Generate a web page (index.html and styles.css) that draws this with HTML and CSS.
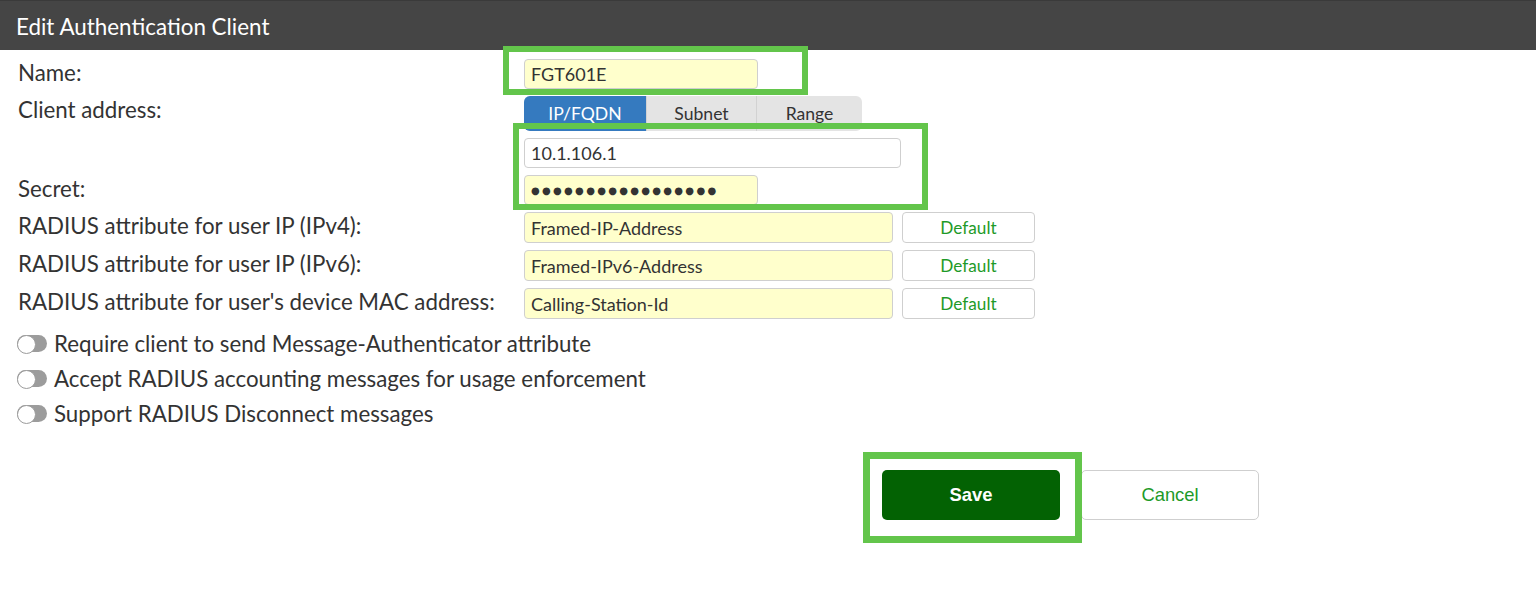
FILE: index.html
```html
<!DOCTYPE html>
<html lang="en">

<head>
    <meta charset="UTF-8">
    <meta name="viewport" content="width=device-width, initial-scale=1.0">
    <title>Edit Authentication Client</title>
    <link rel="stylesheet" href="styles.css">
</head>

<body>
    <header class="title-bar">Edit Authentication Client</header>

    <main class="dialog">
        <div class="form-grid">
            <label class="label">Name:</label>
            <div class="field"><input class="input short yellow" type="text" value="FGT601E" readonly></div>

            <label class="label">Client address:</label>
            <div class="field auto">
                <div class="tabs">
                    <span class="tab active">IP/FQDN</span>
                    <span class="tab">Subnet</span>
                    <span class="tab">Range</span>
                </div>
            </div>

            <span class="label"></span>
            <div class="field"><input class="input wide" type="text" value="10.1.106.1" readonly></div>

            <label class="label">Secret:</label>
            <div class="field"><div class="input short yellow dots">●●●●●●●●●●●●●●●●●</div></div>

            <label class="label">RADIUS attribute for user IP (IPv4):</label>
            <div class="field tall">
                <input class="input attr yellow" type="text" value="Framed-IP-Address" readonly>
                <button class="btn-default">Default</button>
            </div>

            <label class="label">RADIUS attribute for user IP (IPv6):</label>
            <div class="field tall">
                <input class="input attr yellow" type="text" value="Framed-IPv6-Address" readonly>
                <button class="btn-default">Default</button>
            </div>

            <label class="label">RADIUS attribute for user's device MAC address:</label>
            <div class="field tall">
                <input class="input attr yellow" type="text" value="Calling-Station-Id" readonly>
                <button class="btn-default">Default</button>
            </div>
        </div>

        <ul class="toggles">
            <li><span class="toggle"></span>Require client to send Message-Authenticator attribute</li>
            <li><span class="toggle"></span>Accept RADIUS accounting messages for usage enforcement</li>
            <li><span class="toggle"></span>Support RADIUS Disconnect messages</li>
        </ul>

        <div class="actions">
            <button class="btn-save">Save</button>
            <button class="btn-cancel">Cancel</button>
        </div>

        <!-- highlight marks drawn over the form -->
        <div class="mark mark-name"></div>
        <div class="mark mark-address"></div>
        <div class="mark mark-save"></div>
    </main>
</body>

</html>
```

FILE: styles.css
```css
* {
    margin: 0;
    padding: 0;
    box-sizing: border-box;
}

body {
    font-family: Lato, "Open Sans", sans-serif;
    color: #333;
    background: #fff;
}

.title-bar {
    height: 50px;
    line-height: 51px;
    padding-left: 16px;
    background-color: #454545;
    border-top: 1px solid #3a3a3a;
    color: #fff;
    font-size: 22.4px;
}

.dialog {
    position: relative;
    height: 544px;
    padding-top: 9px;
}

.form-grid {
    display: grid;
    grid-template-columns: 524px auto;
    row-gap: 7px;
}

.label {
    padding-left: 18px;
    font-size: 22.3px;
    line-height: 28px;
}

.field {
    display: flex;
    gap: 9px;
    height: 30px;
}

.field.tall {
    height: 31px;
}

.field.auto {
    height: auto;
}

.input {
    height: 100%;
    padding: 0 6px;
    border: 1px solid #cfcfcf;
    border-radius: 4px;
    background: #fff;
    font-family: Lato, sans-serif;
    font-size: 18px;
    color: #333;
    outline: none;
}

.input.yellow {
    background: #ffffcc;
}

.input.short {
    width: 234px;
}

.input.wide {
    width: 377px;
}

.input.attr {
    width: 369px;
}

.dots {
    display: flex;
    align-items: center;
    font-family: "DejaVu Sans", sans-serif;
    font-size: 10px;
    letter-spacing: 2.3px;
    color: #333;
}

.tabs {
    display: flex;
    height: 35px;
    width: 338px;
    border-radius: 6px;
    overflow: hidden;
    background: #e4e4e4;
}

.tab {
    display: flex;
    align-items: center;
    justify-content: center;
    font-size: 17.6px;
    color: #333;
    border-left: 1px solid #d2d2d2;
}

.tab:nth-child(1) {
    width: 122px;
}

.tab:nth-child(2) {
    width: 110px;
}

.tab:nth-child(3) {
    width: 106px;
}

.tab.active {
    background: #357abf;
    color: #fff;
    border-left: none;
}

.btn-default {
    width: 133px;
    height: 100%;
    border: 1px solid #cfcfcf;
    border-radius: 4px;
    background: #fff;
    color: #1e9a28;
    font-family: Lato, sans-serif;
    font-size: 17.2px;
}

.toggles {
    list-style: none;
    margin-top: 7px;
    padding-left: 17px;
}

.toggles li {
    display: flex;
    align-items: center;
    gap: 7px;
    height: 35px;
    font-size: 22.3px;
}

.toggle {
    position: relative;
    width: 30px;
    height: 17px;
    border-radius: 9px;
    background: #9c9c9c;
}

/* knob */
.toggle::before {
    content: "";
    position: absolute;
    left: 0;
    top: 0;
    width: 17px;
    height: 17px;
    border: 1.5px solid #9c9c9c;
    border-radius: 50%;
    background: #fff;
}

.actions {
    display: flex;
    gap: 21px;
    margin-top: 39px;
    padding-left: 882px;
}

.actions button {
    width: 178px;
    height: 50px;
    border-radius: 5px;
    font-family: "Liberation Sans", Arial, sans-serif;
    font-size: 18.4px;
}

.btn-save {
    border: none;
    background: #036203;
    color: #fff;
    font-weight: bold;
}

.btn-cancel {
    width: 177px;
    border: 1px solid #cfcfcf;
    background: #fff;
    color: #1e9a28;
}

.mark {
    position: absolute;
    border: 6px solid #63c54b;
}

.mark-name {
    left: 503px;
    top: -4px;
    width: 305px;
    height: 49px;
}

.mark-address {
    left: 513px;
    top: 73px;
    width: 415px;
    height: 87px;
}

.mark-save {
    left: 863px;
    top: 402px;
    width: 219px;
    height: 91px;
    border-width: 7px;
}
```
